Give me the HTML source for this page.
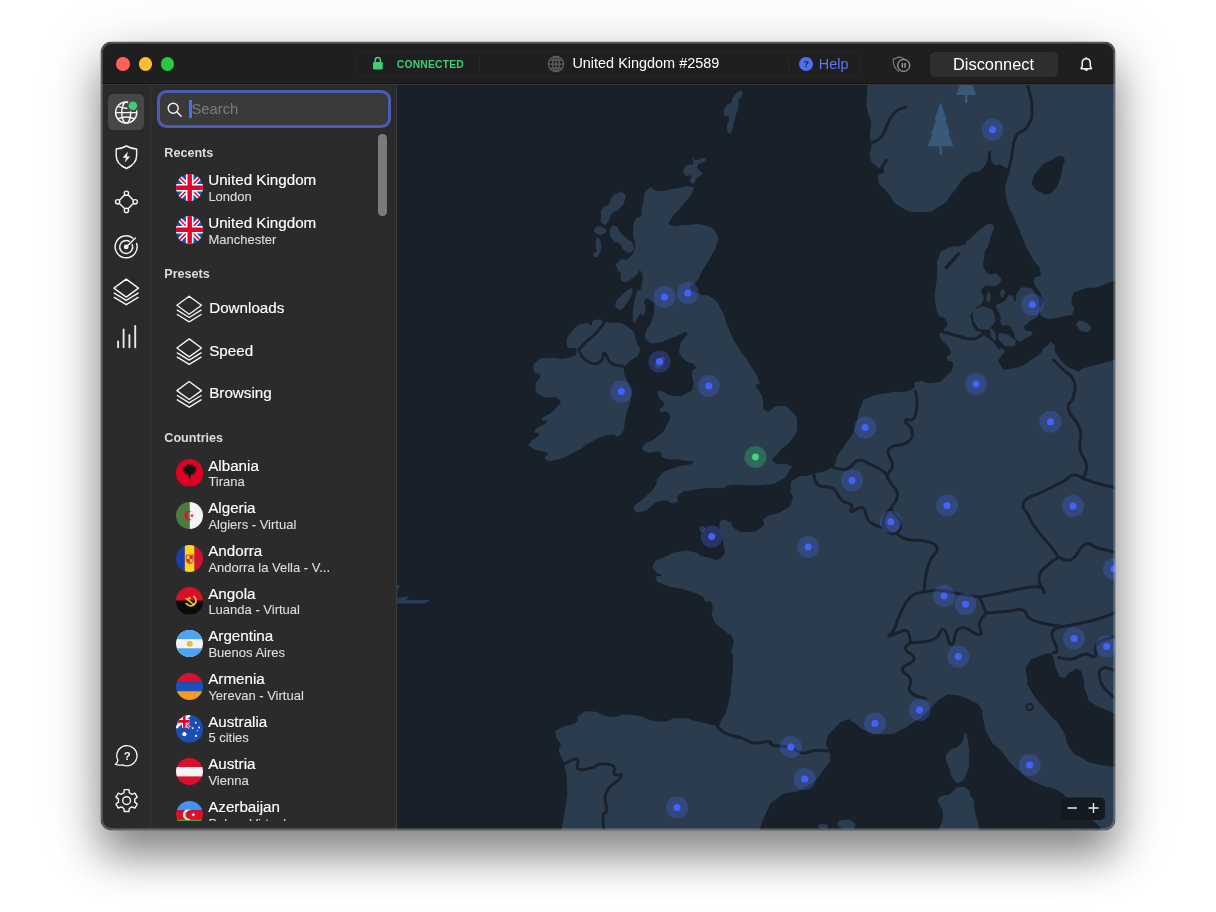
<!DOCTYPE html>
<html lang="en"><head><meta charset="utf-8"><title>VPN</title>
<style>
html,body{margin:0;padding:0;background:#fff;}
body{width:1216px;height:912px;position:relative;overflow:hidden;font-family:"Liberation Sans",Arial,sans-serif;color:#fff;-webkit-font-smoothing:antialiased;}
.shadow{position:absolute;left:101px;top:42px;width:1014px;height:787.5px;border-radius:10.5px;box-shadow:0 0 0 .5px rgba(0,0,0,.35),0 25px 42px rgba(0,0,0,.42),0 12px 70px rgba(0,0,0,.15);background:#1f1f1f;}
.win{position:absolute;left:101px;top:42px;width:1014px;height:787.5px;border-radius:10.5px;overflow:hidden;background:#2a2a2b;}
.pg{position:absolute;left:-101px;top:-42px;width:1216px;height:912px;will-change:transform;}
.abs{position:absolute;}
.tbar{left:100px;top:42px;width:1016px;height:42px;background:#1f1f1f;}
.tline2{left:100px;top:84.2px;width:1016px;height:1px;background:#383838;}
.tline{left:100px;top:83.3px;width:1016px;height:1px;background:#151515;}
.strip{left:100px;top:85px;width:50px;height:746px;background:#2a2a2b;}
.vline{left:150px;top:85px;width:1px;height:746px;background:#353536;}
.list{left:151px;top:85px;width:245.5px;height:746px;background:#2b2b2c;}
.vline2{left:395.8px;top:85px;width:1.2px;height:746px;background:#3b3b3b;}
.map{position:absolute;left:0;top:0;}
.t{position:absolute;white-space:nowrap;line-height:20px;}
.rim{position:absolute;left:101px;top:42px;width:1014px;height:787.5px;border-radius:10.5px;box-shadow:inset 0 0 0 1px rgba(255,255,255,.12),inset 0 0 0 2px rgba(255,255,255,.17);pointer-events:none;}
.tl{position:absolute;top:57.2px;width:13.4px;height:13.4px;border-radius:50%;}
.nm{color:#fff;font-size:15.2px;-webkit-text-stroke:.15px #fff;}
.sb{color:#dedede;-webkit-text-stroke:.1px #dedede;}
.hd{color:#dcdcdc;font-size:12.6px;font-weight:bold;}
.flag{position:absolute;width:27.4px;height:27.4px;border-radius:50%;overflow:hidden;}
.flag svg{display:block;width:100%;height:100%;}
.ico{position:absolute;overflow:visible;}
</style></head><body>
<div class="shadow"></div>
<div class="win"><div class="pg">
<div class="abs tbar"></div>
<div class="abs strip"></div>
<div class="abs list"></div>
<svg class="map" width="1216" height="912" viewBox="0 0 1216 912">
<defs><clipPath id="mc"><path d="M397 85H1116V832H397Z"/></clipPath></defs>
<g clip-path="url(#mc)">
<rect x="397" y="85" width="720" height="748" fill="#18202a"/>
<path d="M868 78L866.5 100C866.5 111.3 866.5 104.7 868 112C869.5 119.3 870.3 114.3 871 122C871.7 129.7 869.8 127.3 870 135C870.2 142.7 871.5 137.7 871.5 145C871.5 152.3 868.5 150 870 157C871.5 164 871.3 161.3 876 166C880.7 170.7 883.3 166.7 884 171C884.7 175.3 876.8 171.8 878 179C879.2 186.2 879.8 183.2 887.5 192.5C895.2 201.8 890 200.5 901 207C912 213.5 907.5 212.3 920.5 212C933.5 211.7 929.2 212.5 940 206C950.8 199.5 944.2 202.5 953 192.5C961.8 182.5 956.5 184.2 966.5 176C976.5 167.8 975.3 176.3 983 168C990.7 159.7 986.2 152.7 989.5 151C992.8 149.3 988.7 158 993 163C997.3 168 997.7 162.2 1002.5 166C1007.3 169.8 1006.3 164.5 1007.5 174.5C1008.7 184.5 1003.2 180.2 1006 196C1008.8 211.8 1008.3 203.3 1016 222C1023.7 240.7 1020.8 235.5 1029 252C1037.2 268.5 1038.8 261.8 1040.5 271.5C1042.2 281.2 1033.5 272.2 1034 281C1034.5 289.8 1039.3 286.3 1042 298C1044.7 309.7 1034.3 310 1042 316C1049.7 322 1054.5 317.7 1065 316C1075.5 314.3 1071.2 317 1073.5 311C1075.8 305 1069.3 305.2 1072 298C1074.7 290.8 1071.8 293.5 1081.5 289.5C1091.2 285.5 1088.2 289.8 1101 286L1120 278L1120 78L868 78ZM648 189C653.5 184.2 649.7 191.2 659 191C668.3 190.8 665.7 190 676 188.5C686.3 187 684.7 185.2 690 186.5C695.3 187.8 694.7 186 692 192.5C689.3 199 689 197.2 682 206C675 214.8 674.3 212.5 671 219C667.7 225.5 667.2 223.5 672 225.5C676.8 227.5 674.5 225 685.5 225C696.5 225 694.7 222.5 705 225.5C715.3 228.5 712.7 227.5 716.5 234C720.3 240.5 718.7 237 716.5 245C714.3 253 714.8 249.2 710 258C705.2 266.8 706.3 263.8 702 271.5C697.7 279.2 701 275.5 697 281C693 286.5 689.3 283.7 690 288C690.7 292.3 691.7 290.7 699 294C706.3 297.3 704.3 292.3 712 298C719.7 303.7 716.7 301.3 722 311C727.3 320.7 722.7 315 728 327C733.3 339 730.8 334.8 738 347C745.2 359.2 742.5 352.2 749.5 363.5C756.5 374.8 756.8 373.5 759 381C761.2 388.5 755 381 756 386C757 391 758.7 387.7 762 396C765.3 404.3 760.3 407.7 766 411C771.7 414.3 770.3 405.7 779 406C787.7 406.3 786 405.7 792 412C798 418.3 797 416 797 425C797 434 798 430 792 439C786 448 785 444.3 779 452C773 459.7 770.7 457.7 774 462C777.3 466.3 784 462 789 465C794 468 792.3 465.7 789 471C785.7 476.3 789 476.3 779 481C769 485.7 774.3 483.7 759 485C743.7 486.3 745 484 733 485C721 486 730.7 487 723 488C715.3 489 720 487.3 710 488C700 488.7 703 488 693 490C683 492 686 489.7 680 494C674 498.3 681.7 500.7 675 503C668.3 505.3 670.3 498.3 660 501C649.7 503.7 652.7 508.7 644 511C635.3 513.3 634 512.3 634 508C634 503.7 637.3 504.7 644 498C650.7 491.3 648.7 495.3 654 488C659.3 480.7 653.3 482.7 660 476C666.7 469.3 663 472.3 674 468C685 463.7 691 465.7 693 463C695 460.3 689.7 461.7 680 460C670.3 458.3 670.7 460.7 664 458C657.3 455.3 665.7 454 660 452C654.3 450 652.3 454.3 647 452C641.7 449.7 640.7 450 644 445C647.3 440 649.3 443.7 657 437C664.7 430.3 663 432.7 667 425C671 417.3 671.3 418.7 669 414C666.7 409.3 661.7 414.3 660 411C658.3 407.7 664.3 408.7 664 404C663.7 399.3 660.3 401.3 659 397C657.7 392.7 655 391.3 660 391C665 390.7 665 395.3 674 396C683 396.7 680.7 396.3 687 393C693.3 389.7 691.3 392.7 693 386C694.7 379.3 691.3 379.7 692 373C692.7 366.3 698 371 695 366C692 361 688 364.7 683 358C678 351.3 678.7 354.3 680 346C681.3 337.7 689 336 687 333C685 330 684 333.7 674 337C664 340.3 666 342 657 343C648 344 650.7 343.7 647 340C643.3 336.3 644.3 338.7 646 332C647.7 325.3 649.3 328.7 652 320C654.7 311.3 654.5 312.3 654 306C653.5 299.7 653 303.3 650.5 301C648 298.7 649 297.7 646.5 299C644 300.3 645.8 298.8 643 305C640.2 311.2 641.3 312.8 638 317.5C634.7 322.2 633.7 326.7 633 319C632.3 311.3 633.3 304.8 636 294.5C638.7 284.2 639.3 295.7 641 288C642.7 280.3 643.7 274.8 641 271.5C638.3 268.2 639 274.7 633 278C627 281.3 627 283.7 623 281.5C619 279.3 620 278.2 621 271.5C622 264.8 621.5 269.2 626 261.5C630.5 253.8 632.2 258.3 634.5 248.5C636.8 238.7 632.5 241.8 633 232C633.5 222.2 633.3 224.5 636 219C638.7 213.5 638.8 220 641 215.5C643.2 211 640.2 214.3 642.5 205.5C644.8 196.7 642.5 193.8 648 189ZM595 320C600.7 319 597 319.7 608 322C619 324.3 618.3 320 628 327C637.7 334 633.3 334.3 637 343C640.7 351.7 642 346.3 639 353C636 359.7 633 357.3 628 363C623 368.7 624 363.3 624 370C624 376.7 625.7 374.3 628 383C630.3 391.7 631.7 385 631 396C630.3 407 629.3 403.3 626 416C622.7 428.7 627 427.7 621 434C615 440.3 618 432.3 608 435C598 437.7 602 436.3 591 442C580 447.7 587 446 575 452C563 458 565 458 555 460C545 462 547.7 460.3 545 458C542.3 455.7 551.3 456.3 547 453C542.7 449.7 537.5 451.7 532 448C526.5 444.3 528.2 446.3 530.5 442C532.8 437.7 537.5 439 539 435C540.5 431 532.3 434.3 535 430C537.7 425.7 544.7 425.7 547 422C549.3 418.3 539.3 423.3 542 419C544.7 414.7 549.5 415.7 555 409C560.5 402.3 562.8 403.3 558.5 399C554.2 394.7 549.7 400.3 542 396C534.3 391.7 536.2 392.7 535.5 386C534.8 379.3 540.5 381 540 376C539.5 371 535 376 534 371C533 366 532 365.3 537 361C542 356.7 538.7 359 549 358C559.3 357 558.8 360.7 568 358C577.2 355.3 576.8 354.3 576.5 350C576.2 345.7 568.2 351.7 567 345C565.8 338.3 567 337.2 573 330C579 322.8 579 325.2 585 323.5C591 321.8 587.7 326.2 591 325C594.3 323.8 589.3 321 595 320ZM741 91C742.7 92 742.7 93 742 96C741.3 99 740.3 96 739 100C737.7 104 739.3 102 738 108C736.7 114 737 110.7 735 118C733 125.3 734 125 732 130C730 135 730.7 134.3 729 133C727.3 131.7 727 131 727 126C727 121 730 122 729 118C728 114 725 118 724 114C723 110 723.7 109.7 726 106C728.3 102.3 728.7 105.7 731 103C733.3 100.3 731 101.3 733 98C735 94.7 734.3 95.3 737 93C739.7 90.7 739.3 90 741 91ZM692 157C693 155.7 692 159.7 696 160C700 160.3 701 157.7 704 158C707 158.3 707 158.7 705 161C703 163.3 700 162 698 165C696 168 697.7 167 699 170C700.3 173 702.7 171.3 702 174C701.3 176.7 699.7 175 697 178C694.3 181 696.3 182 694 183C691.7 184 691 183.3 690 181C689 178.7 692.7 178 691 176C689.3 174 687.3 177.3 685 175C682.7 172.7 683 172.3 684 169C685 165.7 685 166.7 688 165C691 163.3 691.7 166.7 693 164C694.3 161.3 691 158.3 692 157ZM623 193C625.3 195 626 194 625 199C624 204 624.3 203 620 208C615.7 213 616 209.3 612 214C608 218.7 611 218.7 608 222C605 225.3 605.3 225.7 603 224C600.7 222.3 601 222.3 601 217C601 211.7 600.3 212.3 603 208C605.7 203.7 606 207.7 609 204C612 200.3 609 200.7 612 197C615 193.3 614.3 194.3 618 193C621.7 191.7 620.7 191 623 193ZM595 228C597.3 226 600.7 226.3 604 228C607.3 229.7 607.3 231 605 233C602.7 235 600.3 235.7 597 234C593.7 232.3 592.7 230 595 228ZM596 240C597 236.3 598.3 236.7 600 240C601.7 243.3 602 246.3 601 250C600 253.7 598.7 254.3 597 251C595.3 247.7 595 243.7 596 240ZM594 253C595.3 251.3 596.7 251 598 252C599.3 253 599.3 254.3 598 256C596.7 257.7 595.3 258 594 257C592.7 256 592.7 254.7 594 253ZM610 230C611 225.3 612.7 225.3 616 226C619.3 226.7 616.7 228 620 232C623.3 236 621.7 234 626 238C630.3 242 631.3 239.3 633 244C634.7 248.7 634 250 631 252C628 254 627.7 252.7 624 250C620.3 247.3 623.7 247.3 620 244C616.3 240.7 616.3 244.7 613 240C609.7 235.3 609 234.7 610 230ZM618 262C621 259.3 622.7 258 626 260C629.3 262 629.3 264 628 268C626.7 272 625.7 272 622 272C618.3 272 618.3 271.3 617 268C615.7 264.7 615 264.7 618 262ZM616 302C617.3 298 617 300 621 296C625 292 624.3 292.3 628 290C631.7 287.7 631 287 632 289C633 291 633 291 631 296C629 301 629 299.7 626 304C623 308.3 625 307.7 622 309C619 310.3 619 310.3 617 308C615 305.7 614.7 306 616 302ZM640 304C641 300.3 642.3 300.3 644 303C645.7 305.7 646 308.3 645 312C644 315.7 642.7 316.7 641 314C639.3 311.3 639 307.7 640 304ZM655 366C654.7 363 656 362 659 359C662 356 662.3 356 664 357C665.7 358 665.3 358.3 664 362C662.7 365.7 663 366.7 660 368C657 369.3 655.3 369 655 366ZM700 527C701.3 525.7 702.7 525.7 704 527C705.3 528.3 705.3 529.7 704 531C702.7 532.3 701.3 532.3 700 531C698.7 529.7 698.7 528.3 700 527ZM973 313C973.7 307.3 973 309.7 978 308C983 306.3 982.5 305.3 988 308C993.5 310.7 993.2 310 994.5 316C995.8 322 995.5 321.5 992 326C988.5 330.5 989.3 329.8 984 329.5C978.7 329.2 979.7 330.5 976 325C972.3 319.5 972.3 318.7 973 313ZM996.8 304.8C999.1 302.5 999.1 304.7 1003.7 301.4C1008.3 298.1 1006.8 294.9 1010.6 294.9C1014.4 294.9 1012.9 302.3 1015.2 301.4C1017.5 300.5 1013.7 296.8 1017.5 292.2C1021.3 287.6 1020.6 286.8 1026.7 287.6C1032.8 288.4 1031.7 287.6 1035.9 294.5C1040.1 301.4 1038.6 301.4 1039.4 308.3C1040.2 315.2 1041.7 310.6 1038.2 315.2C1034.7 319.8 1033.6 317.5 1029 322.1C1024.4 326.7 1023.2 325.5 1024.4 329C1025.6 332.5 1032.1 329.4 1032.5 332.5C1032.9 335.6 1030.6 335.5 1025.6 338.2C1020.6 340.9 1021.7 342.9 1017.5 340.6C1013.3 338.3 1016 336.3 1012.9 331.3C1009.8 326.3 1012.1 327.9 1008.3 325.6C1004.5 323.3 1004.1 327.9 1001.4 324.4C998.7 320.9 1001.7 320.6 1000.2 315.2C998.7 309.8 997.9 311.8 996.8 308.3C995.7 304.8 994.5 307.1 996.8 304.8ZM998.5 335.5C999.2 332.3 999.5 332.8 1004 333.5C1008.5 334.2 1008.2 334.3 1012 337.5C1015.8 340.7 1016.2 340 1015.5 343C1014.8 346 1014.5 346.5 1010 346.5C1005.5 346.5 1005.8 346.7 1002 343C998.2 339.3 997.8 338.7 998.5 335.5ZM999 350C1000 348.3 1001.3 348 1003 349C1004.7 350 1005 351.3 1004 353C1003 354.7 1001.7 355 1000 354C998.3 353 998 351.7 999 350ZM1077 323C1078.3 320.7 1078 320.3 1082 321C1086 321.7 1086.3 322 1089 325C1091.7 328 1091.3 327.7 1090 330C1088.7 332.3 1089 332.7 1085 332C1081 331.3 1080.7 331 1078 328C1075.3 325 1075.7 325.3 1077 323ZM987 294C988 291.3 989 291 990 293C991 295 991 297.3 990 300C989 302.7 988 303 987 301C986 299 986 296.7 987 294ZM990 331C990 328 991 327.7 993 330C995 332.3 996 335 996 338C996 341 995 341.3 993 339C991 336.7 990 334 990 331ZM1001 291C1002 289 1003 288.3 1004 290C1005 291.7 1005 294 1004 296C1003 298 1002 297.7 1001 296C1000 294.3 1000 293 1001 291ZM965 733C966.8 733.3 966.7 733.7 968 742C969.3 750.3 969.3 748 969 758C968.7 768 969.8 764 967 772C964.2 780 965 779.7 960.5 782C956 784.3 957.2 783.5 953.5 779C949.8 774.5 952 775.5 949.5 768.5C947 761.5 946 763.8 946 758C946 752.2 945.7 754.8 949.5 751C953.3 747.2 953.2 749.8 957.5 746.5C961.8 743.2 960 745.5 962.5 741C965 736.5 963.2 732.7 965 733ZM938 799C939.3 795.5 940 797.2 944 795.5C948 793.8 946.3 796.2 950 794C953.7 791.8 951.7 791.3 955 789C958.3 786.7 956 787 960 787C964 787 963.3 786 967 789C970.7 792 968.7 790.3 971 796C973.3 801.7 973 792 974 806C975 820 984.3 827.3 974 838C963.7 848.7 953.3 845.7 943 838C932.7 830.3 944 825.7 943 815C942 804.3 941.7 811.3 940 806C938.3 800.7 936.7 802.5 938 799ZM838 823C839.3 820.3 840 820.3 845 820C850 819.7 849.7 819.7 853 822C856.3 824.3 856 824.7 855 827C854 829.3 854.7 828.7 850 829C845.3 829.3 845 830 841 828C837 826 836.7 825.7 838 823ZM818 826C818.7 824.3 820.7 823.7 824 824C827.3 824.3 828.7 825.3 828 827C827.3 828.7 825.3 829.3 822 829C818.7 828.7 817.3 827.7 818 826ZM560.5 836L565.5 807C567.7 789.7 567.5 798.3 567 784C566.5 769.7 566.7 775 564 764C561.3 753 560.2 757.5 559 751C557.8 744.5 561.7 750 560.5 744.5C559.3 739 555.5 740 555.5 734.5C555.5 729 554 731.8 560.5 728C567 724.2 568.5 727.3 575 723C581.5 718.7 574 718.8 580 715C586 711.2 583 711 593 711.5C603 712 596.7 715.3 610 716.5C623.3 717.7 616.7 713.3 633 715C649.3 716.7 643.7 720.5 659 721.5C674.3 722.5 665.8 718 679 718C692.2 718 686 719.2 698.5 721.5C711 723.8 708.8 725.5 716.5 725C724.2 724.5 717.7 726.7 721.5 720C725.3 713.3 724.7 717.7 728 705C731.3 692.3 729.8 697.3 731.5 682C733.2 666.7 733 669 733 659C733 649 731.5 658.7 731.5 652C731.5 645.3 735.2 646 733 639C730.8 632 731.5 637.5 725 631C718.5 624.5 717.8 628.3 713.5 619.5C709.2 610.7 714.8 610.7 712 604.5C709.2 598.3 708.3 603.7 705 601C701.7 598.3 708.5 600.2 702 596.5C695.5 592.8 697.7 593.8 685.5 590C673.3 586.2 675.3 589 665.5 585C655.7 581 657.2 581.3 656 578C654.8 574.7 662 577 662 575C662 573 658.7 575.8 656 572C653.3 568.2 651 568.5 654 563.5C657 558.5 656.3 561 665 557C673.7 553 670.7 553.2 680 551.5C689.3 549.8 684.3 550.2 693 552C701.7 553.8 696.3 555.3 706 557C715.7 558.7 716.3 562.5 722 557C727.7 551.5 723.7 552 723 540.5C722.3 529 717.3 528.5 720 522.5C722.7 516.5 726.7 521 731 522.5C735.3 524 728 523.8 733 527C738 530.2 736.3 532 746 532C755.7 532 755.5 531.8 762 527C768.5 522.2 758.8 522.8 765.5 517.5C772.2 512.2 773.2 516.5 782 511C790.8 505.5 789.2 508.5 792 501C794.8 493.5 789.3 496 790.5 488.5C791.7 481 787.8 483.3 795.5 478.5C803.2 473.7 801.5 477.8 813.5 474C825.5 470.2 823.3 473.3 831.5 467C839.7 460.7 833.5 462.3 838 455C842.5 447.7 839.5 453.7 845 445C850.5 436.3 849.2 442 854.5 429C859.8 416 856.5 416.3 861 406C865.5 395.7 859.2 402.3 868 398C876.8 393.7 873.3 395.7 887.5 393C901.7 390.3 900.7 393.8 910.5 390C920.3 386.2 909.3 383.8 917 381.5C924.7 379.2 924.2 384.5 933.5 383C942.8 381.5 938.5 383 945 377C951.5 371 952.3 371.2 953 365C953.7 358.8 948 363.5 947 358.5C946 353.5 952.3 357.2 950 350C947.7 342.8 942.2 343.5 940 337C937.8 330.5 941.3 335.8 943.5 330.5C945.7 325.2 949 328.7 946.5 321C944 313.3 939.2 322.8 936 307.5C932.8 292.2 936.2 291.5 937 275C937.8 258.5 935.2 266.8 938.5 258C941.8 249.2 938.8 252.8 947 248.5C955.2 244.2 955.3 248.3 963 245C970.7 241.7 960.7 245.5 970 238.5C979.3 231.5 984.5 222.8 991 224C997.5 225.2 991.7 231.7 989.5 242C987.3 252.3 985.7 245.2 984.5 255C983.3 264.8 981.5 264.8 986 271.5C990.5 278.2 994 270.7 998 275C1002 279.3 1003 280.2 998 284.5C993 288.8 988 282.5 983 288C978 293.5 986.3 293.3 983 301C979.7 308.7 976.8 304.3 973 311C969.2 317.7 970.3 314.5 971.5 321C972.7 327.5 972.7 326.2 976.5 330.5C980.3 334.8 975.3 327.3 983 334C990.7 340.7 994 340.7 999.5 350.5C1005 360.3 995.2 357.5 999.5 363.5C1003.8 369.5 1000.5 370.7 1012.5 368.5C1024.5 366.3 1024.5 364.2 1035.5 357C1046.5 349.8 1039.5 351.3 1045.5 347C1051.5 342.7 1049.2 340.7 1053.5 344C1057.8 347.3 1051.3 348.3 1058.5 357C1065.7 365.7 1065.2 366.7 1075 370C1084.8 373.3 1073 370.8 1088 367L1120 358.5L1120 716L1096 705.5C1084.8 698 1090.8 702.8 1086.5 693.5C1082.2 684.2 1085.7 685.5 1083 677.5C1080.3 669.5 1082.7 671.3 1078.5 669.5C1074.3 667.7 1075.8 669.3 1070.5 672C1065.2 674.7 1067.2 678.3 1062.5 677.5C1057.8 676.7 1059.7 676.3 1056.5 669.5C1053.3 662.7 1055.3 662.3 1053 657C1050.7 651.7 1054.5 653.5 1049.5 653.5C1044.5 653.5 1045.2 653.5 1038 657C1030.8 660.5 1031.7 657.2 1028 664C1024.3 670.8 1025.8 668.3 1027 677.5C1028.2 686.7 1024.7 680 1031.5 691.5C1038.3 703 1037.5 699.7 1047.5 712C1057.5 724.3 1053.8 716.2 1061.5 728.5C1069.2 740.8 1063.7 739.2 1070.5 749C1077.3 758.8 1073.5 753 1082 758C1090.5 763 1083.3 760.7 1096 764L1120 768L1120 836L1104 836L1100.5 828C1097.2 823.2 1099.5 826.5 1094 821.5C1088.5 816.5 1091.3 818.8 1084 813C1076.7 807.2 1080.5 811.3 1072 804C1063.5 796.7 1069.5 797.7 1058.5 791C1047.5 784.3 1052.2 790.7 1039 784C1025.8 777.3 1031.7 782 1019 771C1006.3 760 1010.8 762 1001 751C991.2 740 995.5 748.8 989.5 738C983.5 727.2 985.8 728.3 983 718.5C980.2 708.7 985.3 714.7 981 708.5C976.7 702.3 979.3 704.5 970 700C960.7 695.5 961.8 696 953 695C944.2 694 950 693.7 943.5 697C937 700.3 940 699 933.5 705C927 711 930.5 709.3 924 715C917.5 720.7 921.8 717 914 722C906.2 727 909.3 726 900.5 730C891.7 734 898.3 733.5 887.5 734C876.7 734.5 879 735.2 868 731.5C857 727.8 861.7 726.8 854.5 723C847.3 719.2 853 718.3 846.5 720C840 721.7 841.7 720.8 835 728C828.3 735.2 828.2 732.7 826.5 741.5C824.8 750.3 830.5 745.7 830 754.5C829.5 763.3 833.3 757 825 768C816.7 779 820.3 777.8 805 787.5C789.7 797.2 792.3 787.8 779 797C765.7 806.2 772.3 802 765 815L757 836L560.5 836Z" fill="#2a3c4e"/>
<path d="M1063 157C1059 153.8 1057.7 156.8 1050 160.5C1042.3 164.2 1045.8 161.5 1040 168C1034.2 174.5 1034.5 173.5 1032.5 180C1030.5 186.5 1031.2 183.3 1034 187.5C1036.8 191.7 1036.3 190.3 1041 192.5C1045.7 194.7 1043.7 194.8 1048 194C1052.3 193.2 1050.5 193.7 1054 190C1057.5 186.3 1055.8 189.7 1058.5 183C1061.2 176.3 1060.5 178.7 1062 170C1063.5 161.3 1067 160.2 1063 157Z" fill="#18202a"/>
<path d="M397 598L409 596.5L406 600L430 600L425 603.5L397 603.5ZM397 585L400 585L398 590L397 590Z" fill="#253d58"/>
<path d="M940.6 102.2L947 120.6L945.2 119.8L950.2 134L948.3 133L953.3 146.2L927.9 146.2L932.9 133L931 134L936 119.8L934.2 120.6ZM939.5 146.2h2.2v8.8h-2.2ZM966.1 60.6L971.1 75L969.7 74.4L973.6 85.5L972.2 84.8L976.1 95.1L956.1 95.1L960 84.8L958.6 85.5L962.5 74.4L961.1 75ZM965 95.1h2.2v7.8h-2.2Z" fill="#38597a"/>
<path d="M604.5 322C602.2 324.9 601.7 326.9 596 333C590.3 339.1 587.3 339.7 583 345C578.7 350.3 577.9 348.2 580 353C582.1 357.8 585.4 360.9 591 363C596.6 365.1 597.4 363.7 601 361C604.6 358.3 601.8 352.5 604.5 353C607.2 353.5 606.2 359.5 611 363C615.8 366.5 619.4 365.2 622.5 366M915.5 391.5C915.9 394.6 917.4 395.9 917 403C916.6 410.1 917.1 413.2 914 418C910.9 422.8 906 417.5 905.5 421C905 424.5 911.6 425.3 912 431C912.4 436.7 913.1 437.7 907 442.5C900.9 447.3 892.9 442.9 889 449C885.1 455.1 892.9 458.6 892.5 465.5C892.1 472.4 887.9 470.2 887.5 475C887.1 479.8 890.1 481.2 891 483.5M831.5 467C835.5 467.5 839.4 470.7 846.5 469C853.6 467.3 851.9 461.8 858 460.5C864.1 459.2 862.6 460.9 869.5 464C876.4 467.1 879.2 468.1 884 472C888.8 475.9 886.6 476.8 887.5 478.5M887.5 478.5C888.4 479.8 888.3 479.1 891 483.5C893.7 487.9 897.5 488.5 897.5 495C897.5 501.5 892.7 504.5 891 508M813.5 474C814.8 476.9 813.3 481.1 818.5 485C823.7 488.9 826.9 484.5 833 488.5C839.1 492.5 836.6 495.6 841.5 500C846.4 504.4 848.8 501.9 851.5 505C854.2 508.1 848.4 510.7 851.5 511.5C854.6 512.3 858.2 505.3 863 508C867.8 510.7 863.9 516.2 869.5 521.5C875.1 526.8 880.1 526.3 884 528M891 508C889.1 510.7 885.3 512.3 884 518C882.7 523.7 882.8 525.5 886 529.5C889.2 533.5 892.1 534.7 896 533C899.9 531.3 901.4 528.7 900.5 523C899.6 517.3 895 515.5 892.5 511.5C890 507.5 891.4 508.9 891 508M896 533C898.9 534.7 899.5 537.4 907 539.5C914.5 541.6 916 538.7 924 541C932 543.3 935.4 542.7 937 548C938.6 553.3 933.1 553.3 930 561C926.9 568.7 927.1 568.7 925.5 577C923.9 585.3 924.4 588 924 592M924 592C928.3 591.6 930.4 590 940 590.5C949.6 591 949.5 592.3 960 594C970.5 595.7 974.3 596.2 979.5 597M979.5 597C983.9 596.2 985.5 596.1 996 594C1006.5 591.9 1007.5 590.9 1019 589C1030.5 587.1 1032.3 586.2 1039 587C1045.7 587.8 1044 594.7 1044 592C1044 589.3 1037.7 584.5 1039 577C1040.3 569.5 1043.8 569.2 1049 564C1054.2 558.8 1056 559.2 1058.5 557.5M1058.5 557.5C1056.8 555 1058.1 555.9 1052 548C1045.9 540.1 1041.6 536.4 1035.5 528C1029.4 519.6 1032.1 523.4 1029 516.5C1025.9 509.6 1020.5 508.5 1024 502C1027.5 495.5 1031.9 497.3 1042 492C1052.1 486.7 1053.6 486.5 1062 482C1070.4 477.5 1067.9 475.9 1073.5 475C1079.1 474.1 1080.5 477.6 1083 478.5M1053.5 360C1056.2 362.7 1058.2 364.7 1063.5 370C1068.8 375.3 1070.8 372.9 1073.5 380C1076.2 387.1 1074.8 388.6 1073.5 396.5C1072.2 404.4 1066.8 400.8 1068.5 409.5C1070.2 418.2 1076.9 418.5 1080 429C1083.1 439.5 1078.3 439.3 1080 449C1081.7 458.7 1085.7 457.6 1086.5 465.5C1087.3 473.4 1083.9 475 1083 478.5M1083 478.5C1087 479.8 1088.7 480.8 1098 483.5C1107.3 486.2 1112.7 487.2 1118 488.5M1058.5 557.5C1062.1 557.9 1064.9 562.5 1072 559C1079.1 555.5 1078.1 547.4 1085 544.5C1091.9 541.6 1089.2 545.7 1098 548C1106.8 550.3 1112.7 551.7 1118 553M924 592C920.4 593.3 916.8 591.3 910.5 597C904.2 602.7 904.9 604.8 900.5 613.5C896.1 622.2 897.1 623.5 894 629.5C890.9 635.5 888.1 635.1 889 636C889.9 636.9 892.7 634.3 897.5 633C902.3 631.7 903.5 628.3 907 631C910.5 633.7 909.6 639.8 910.5 643M910.5 643C916.6 642.1 924.7 643.1 933.5 639.5C942.3 635.9 938.7 628.2 943.5 629.5C948.3 630.8 947.1 644.9 951.5 644.5C955.9 644.1 952.5 630.7 960 628C967.5 625.3 974.3 635.8 979.5 634.5C984.7 633.2 977.8 628.7 979.5 623C981.2 617.3 984.3 615.7 986 613M979.5 597C980.4 599.1 981.3 600.7 983 605C984.7 609.3 985.2 610.9 986 613M986 613C991.3 612.6 996.3 612.3 1006 611.5C1015.7 610.7 1016.4 608.3 1022.5 610C1028.6 611.7 1023.8 614.5 1029 618C1034.2 621.5 1033.2 620.7 1042 623C1050.8 625.3 1056.7 625.6 1062 626.5M1062 626.5C1067.2 625.6 1071.1 625.3 1081.5 623C1091.9 620.7 1091.3 621.1 1101 618C1110.7 614.9 1113.5 613.2 1118 611.5M1062 626.5C1059.3 628.2 1053.3 627 1052 633C1050.7 639 1056.6 643.8 1057 649C1057.4 654.2 1054.4 651.6 1053.5 652.5M1058.5 657.5C1062.1 657.9 1064.9 659.9 1072 659C1079.1 658.1 1078.9 654.8 1085 654C1091.1 653.2 1091.5 658.9 1095 656C1098.5 653.1 1091.9 648.3 1098 643C1104.1 637.7 1112.7 637.9 1118 636M925.5 698.5C921.5 696.8 914.5 697.2 910.5 692C906.5 686.8 912.6 685.1 910.5 679C908.4 672.9 901.6 674.3 902.5 669C903.4 663.7 913.2 664.3 914 659C914.8 653.7 906.4 653.3 905.5 649C904.6 644.7 909.2 644.6 910.5 643M716.5 725C718.8 727.1 718.3 729.5 725 733C731.7 736.5 733.6 735.3 741.5 738C749.4 740.7 747.2 742.1 754.5 743C761.8 743.9 764.2 741 769 741.5C773.8 742 766.8 743.4 772.5 745C778.2 746.6 782.6 745.4 790.5 747.5C798.4 749.6 795.5 752.2 802 753C808.5 753.8 807.5 751 815 750.5C822.5 750 826 750.9 830 751M564 764C567.5 762.7 573.1 757.7 577 759C580.9 760.3 574.2 766.7 578.5 769C582.8 771.3 587.3 768.8 593 767.5C598.7 766.2 594.7 764.4 600 764C605.3 763.6 609.1 763.3 613 766C616.9 768.7 612.4 771.1 614.5 774C616.6 776.9 623.1 772.2 621 777C618.9 781.8 610.4 783.2 606.5 792C602.6 800.8 607.4 803.3 606.5 810C605.6 816.7 603.4 809.5 603 817C602.6 824.5 604.5 832.4 605 838M943.5 332C947.4 333.1 950.1 334.1 958 336C965.9 337.9 966.3 339.5 973 339C979.7 338.5 980.3 335.3 983 334M1025.5 78C1027.2 85.7 1031.6 93.9 1032 107C1032.4 120.1 1031.3 119.1 1027 127C1022.7 134.9 1020.3 127.7 1016 136.5C1011.7 145.3 1013.3 149.9 1011 160C1008.7 170.1 1008.4 170.6 1007.5 174.5M905.5 107C903 108.2 900.4 107.8 896 111.5C891.6 115.2 892.7 114.5 889 121C885.3 127.5 886.3 130.3 882 136C877.7 141.7 875.4 140.8 873 142.5M878 173C879.3 171.1 880.7 169.5 883 166C885.3 162.5 885.6 161.6 886.5 160M1118 672C1114 670.9 1107.8 665.9 1103 668C1098.2 670.1 1098.7 673.6 1100 680C1101.3 686.4 1103.2 686.7 1108 692C1112.8 697.3 1115.3 697.9 1118 700" fill="none" stroke="#19212c" stroke-width="2.9" stroke-linejoin="round" stroke-linecap="round"/>
<path d="M958.5 254C956.8 255.9 955.2 257.4 952 261C948.8 264.6 948 265.8 946.5 267.5" fill="none" stroke="#18202a" stroke-width="3.4" stroke-linecap="round"/>
<circle cx="1029.7" cy="707" r="3.2" fill="none" stroke="#19212c" stroke-width="1.8"/>
<circle cx="664.4" cy="297" r="11" fill="#4a6cf7" fill-opacity=".28"/><circle cx="664.4" cy="297" r="3.5" fill="#4262fa"/><circle cx="687.8" cy="293" r="11" fill="#4a6cf7" fill-opacity=".28"/><circle cx="687.8" cy="293" r="3.5" fill="#4262fa"/><circle cx="659.5" cy="361.6" r="11" fill="#4a6cf7" fill-opacity=".28"/><circle cx="659.5" cy="361.6" r="3.5" fill="#4262fa"/><circle cx="708.8" cy="386" r="11" fill="#4a6cf7" fill-opacity=".28"/><circle cx="708.8" cy="386" r="3.5" fill="#4262fa"/><circle cx="621.3" cy="391.6" r="11" fill="#4a6cf7" fill-opacity=".28"/><circle cx="621.3" cy="391.6" r="3.5" fill="#4262fa"/><circle cx="865.2" cy="427.4" r="11" fill="#4a6cf7" fill-opacity=".28"/><circle cx="865.2" cy="427.4" r="3.5" fill="#4262fa"/><circle cx="852" cy="480.4" r="11" fill="#4a6cf7" fill-opacity=".28"/><circle cx="852" cy="480.4" r="3.5" fill="#4262fa"/><circle cx="890.7" cy="521.8" r="11" fill="#4a6cf7" fill-opacity=".28"/><circle cx="890.7" cy="521.8" r="3.5" fill="#4262fa"/><circle cx="711.8" cy="536.6" r="11" fill="#4a6cf7" fill-opacity=".28"/><circle cx="711.8" cy="536.6" r="3.5" fill="#4262fa"/><circle cx="808.2" cy="547" r="11" fill="#4a6cf7" fill-opacity=".28"/><circle cx="808.2" cy="547" r="3.5" fill="#4262fa"/><circle cx="992.5" cy="129.7" r="11" fill="#4a6cf7" fill-opacity=".28"/><circle cx="992.5" cy="129.7" r="3.5" fill="#4262fa"/><circle cx="1032.3" cy="304.4" r="11" fill="#4a6cf7" fill-opacity=".28"/><circle cx="1032.3" cy="304.4" r="3.5" fill="#4262fa"/><circle cx="976" cy="384" r="11" fill="#4a6cf7" fill-opacity=".28"/><circle cx="976" cy="384" r="3.5" fill="#4262fa"/><circle cx="1050.4" cy="421.8" r="11" fill="#4a6cf7" fill-opacity=".28"/><circle cx="1050.4" cy="421.8" r="3.5" fill="#4262fa"/><circle cx="947" cy="505.4" r="11" fill="#4a6cf7" fill-opacity=".28"/><circle cx="947" cy="505.4" r="3.5" fill="#4262fa"/><circle cx="1073" cy="506" r="11" fill="#4a6cf7" fill-opacity=".28"/><circle cx="1073" cy="506" r="3.5" fill="#4262fa"/><circle cx="944" cy="596" r="11" fill="#4a6cf7" fill-opacity=".28"/><circle cx="944" cy="596" r="3.5" fill="#4262fa"/><circle cx="965.5" cy="604.3" r="11" fill="#4a6cf7" fill-opacity=".28"/><circle cx="965.5" cy="604.3" r="3.5" fill="#4262fa"/><circle cx="1114" cy="569" r="11" fill="#4a6cf7" fill-opacity=".28"/><circle cx="1114" cy="569" r="3.5" fill="#4262fa"/><circle cx="1074" cy="638.5" r="11" fill="#4a6cf7" fill-opacity=".28"/><circle cx="1074" cy="638.5" r="3.5" fill="#4262fa"/><circle cx="1106.7" cy="646.4" r="11" fill="#4a6cf7" fill-opacity=".28"/><circle cx="1106.7" cy="646.4" r="3.5" fill="#4262fa"/><circle cx="958.3" cy="656.6" r="11" fill="#4a6cf7" fill-opacity=".28"/><circle cx="958.3" cy="656.6" r="3.5" fill="#4262fa"/><circle cx="919.5" cy="710" r="11" fill="#4a6cf7" fill-opacity=".28"/><circle cx="919.5" cy="710" r="3.5" fill="#4262fa"/><circle cx="875" cy="723.4" r="11" fill="#4a6cf7" fill-opacity=".28"/><circle cx="875" cy="723.4" r="3.5" fill="#4262fa"/><circle cx="790.9" cy="747" r="11" fill="#4a6cf7" fill-opacity=".28"/><circle cx="790.9" cy="747" r="3.5" fill="#4262fa"/><circle cx="804.7" cy="779" r="11" fill="#4a6cf7" fill-opacity=".28"/><circle cx="804.7" cy="779" r="3.5" fill="#4262fa"/><circle cx="1029.7" cy="765" r="11" fill="#4a6cf7" fill-opacity=".28"/><circle cx="1029.7" cy="765" r="3.5" fill="#4262fa"/><circle cx="677" cy="807.4" r="11" fill="#4a6cf7" fill-opacity=".28"/><circle cx="677" cy="807.4" r="3.5" fill="#4262fa"/><circle cx="755.5" cy="457" r="11" fill="#3fd07a" fill-opacity=".3"/><circle cx="755.5" cy="457" r="3.4" fill="#3fd67c"/>
<rect x="1061" y="797.5" width="44" height="22.5" rx="4.5" fill="#141a22"/>
<path d="M1067.5 808h9.5M1088.5 808h10M1093.5 803v10" stroke="#e8e8e8" stroke-width="1.4" fill="none"/>
</g>
</svg>
<div class="abs tline2"></div>
<div class="abs tline"></div>
<div class="abs vline"></div>
<div class="abs vline2"></div>
<div class="tl" style="left:116.4px;background:#fe5f58"></div><div class="tl" style="left:138.7px;background:#febc2e"></div><div class="tl" style="left:161.1px;background:#28c840"></div><div class="abs" style="left:355px;top:51px;width:505px;height:25.5px;border-radius:6px;box-shadow:inset 0 0 0 1px #262626;background:#1f1f1f"></div><svg class="ico" style="left:372px;top:56px" width="12" height="15" viewBox="0 0 12 15"><path d="M3.2 6.2V4.1a2.6 2.6 0 0 1 5.2 0v2.1" fill="none" stroke="#3fcf72" stroke-width="1.5"/><rect x="1" y="6" width="9.7" height="7.6" rx="1.3" fill="#3fcf72"/></svg><div class="t " style="left:396.8px;top:54.63px;font-size:10.3px;font-weight:bold;color:#3fcf72;letter-spacing:.22px">CONNECTED</div><div class="abs" style="left:479px;top:57.5px;width:1px;height:13.5px;background:#2c2c2c"></div><svg class="ico" style="left:547px;top:55px" width="18" height="18" viewBox="0 0 18 18"><g fill="none" stroke="#5d6268" stroke-width="1.25"><circle cx="9" cy="9" r="7.6"/><ellipse cx="9" cy="9" rx="3.4" ry="7.6"/><path d="M1.4 9h15.2M9 1.4v15.2M2.6 5h12.8M2.6 13h12.8"/></g></svg><div class="t " style="left:572.4px;top:53.39px;font-size:14.45px;color:#fff">United Kingdom #2589</div><div class="abs" style="left:788px;top:57.5px;width:1px;height:13.5px;background:#2c2c2c"></div><div class="abs" style="left:798.9px;top:56.9px;width:14px;height:14px;border-radius:50%;background:#4f6ef2"></div><div class="t " style="left:803.4px;top:53.98px;font-size:9px;font-weight:bold;color:#1f1f1f">?</div><div class="t " style="left:818.8px;top:54.01px;font-size:14.4px;color:#5a78f5">Help</div><svg class="ico" style="left:0;top:0" width="1216" height="912" viewBox="0 0 1216 912"><g fill="none" stroke-linecap="round" stroke-linejoin="round"><path d="M903.8 58.5L899 56.9L893.2 59.4C893 64 894.2 68.300 898.600 71.300" stroke="#777" stroke-width="1.200"/><circle cx="903.700" cy="65.400" r="6" stroke="#9a9a9a" stroke-width="1.250" fill="#1f1f1f"/><path d="M902.400 63.100v4.700M905 63.100v4.700" stroke="#a2a2a2" stroke-width="1.350" stroke-linecap="butt"/></g></svg><div class="abs" style="left:930.3px;top:52px;width:128px;height:24.6px;border-radius:5.5px;background:#2f2f2f"></div><div class="t " style="left:953.0px;top:53.82px;font-size:16.4px;color:#fff">Disconnect</div><svg class="ico" style="left:0;top:0" width="1216" height="912" viewBox="0 0 1216 912"><g transform="translate(1086.25 64.3) scale(.88) translate(-1086.25 -64.3)" fill="none" stroke="#f2f2f2" stroke-width="1.75" stroke-linejoin="round" stroke-linecap="round"><path d="M1086.25 57.9C1083.2 57.9 1081.700 60 1081.700 62.700L1081.600 66.200C1081.600 67.200 1081.100 68 1080.500 68.600C1080.200 69 1080.400 69.300 1080.900 69.300L1091.600 69.300C1092.100 69.300 1092.300 69 1092 68.600C1091.400 68 1090.900 67.200 1090.900 66.200L1090.800 62.700C1090.800 60 1089.300 57.900 1086.250 57.900Z"/><path d="M1084.800 69.900C1084.900 71.300 1087.600 71.300 1087.700 69.900M1086.250 56.900v.8"/></g></svg>
<div class="abs" style="left:108.3px;top:94.3px;width:36px;height:35.6px;border-radius:5.5px;background:#474747"></div><div class="t " style="left:123.8px;top:745.75px;font-size:11.4px;color:#f4f4f4;font-weight:bold">?</div><svg class="ico" style="left:0;top:0" width="1216" height="912" viewBox="0 0 1216 912"><g fill="none" stroke="#f4f4f4" stroke-width="1.45"><circle cx="126.2" cy="112.6" r="10.6"/><ellipse cx="126.2" cy="112.6" rx="4.5" ry="10.6"/><path d="M115.60000000000001 112.6h21.2M117.60000000000001 106.19999999999999Q126.2 110.19999999999999 134.8 106.19999999999999M117.60000000000001 119.0Q126.2 115.0 134.8 119.0"/></g><circle cx="132.9" cy="105.8" r="6" fill="#474747"/><circle cx="132.9" cy="105.8" r="4.3" fill="#3fcf72"/><path d="M126.4 146.0C129.9 148.0 133.4 148.79999999999998 136.6 149.0L136.6 155.7C136.6 161.7 131.9 166.0 126.4 168.5C120.9 166.0 116.2 161.7 116.2 155.7L116.2 149.0C119.4 148.79999999999998 122.9 148.0 126.4 146.0Z" fill="none" stroke="#f4f4f4" stroke-width="1.45" stroke-linejoin="round"/><path d="M128.0 151.6l-5.4 6.2h3.4l-1.200 4.800 5.400-6.200h-3.400z" fill="#f4f4f4"/><g fill="none" stroke="#f4f4f4" stroke-width="1.35"><circle cx="126.4" cy="193.20000000000002" r="2.15"/><circle cx="126.4" cy="210.4" r="2.15"/><circle cx="117.60000000000001" cy="201.8" r="2.15"/><circle cx="135.20000000000002" cy="201.8" r="2.15"/><path d="M124.80000000000001 194.8l-5.4 5.4M128.0 194.8l5.4 5.4M124.80000000000001 208.8l-5.4-5.4M128.0 208.8l5.4-5.4"/></g><g fill="none" stroke="#f4f4f4" stroke-width="1.45" stroke-linecap="round"><path d="M132.8 238.1A11 11 0 1 0 136.6 243.5"/><path d="M129.4 241.3A6.5 6.5 0 1 0 132.2 244.5"/><path d="M126.2 246.9L135.4 237.9"/></g><circle cx="126.2" cy="246.9" r="2.4" fill="#f4f4f4"/><path d="M126.2 279.1L138.5 288.2L126.2 297.1L113.9 288.2ZM114.30000000000001 293.1L126.2 300.40000000000003L138.1 293.1M114.30000000000001 297.40000000000003L126.2 304.7L138.1 297.40000000000003" fill="none" stroke="#f4f4f4" stroke-width="1.45" stroke-linejoin="round" stroke-linecap="round"/><path d="M118.1 347.3v-5.800M123.600 347.300v-17.800M129.400 347.300v-12.400M135.200 347.300v-21.400" fill="none" stroke="#e6e6e6" stroke-width="1.9" stroke-linecap="round"/><path d="M117.9 760.3000000000001A10.1 10.1 0 1 1 122.5 764.8000000000001C120.30000000000001 765.3000000000001 117.7 765.1 115.30000000000001 764.3000000000001C116.7 763.3000000000001 117.5 761.9000000000001 117.9 760.3000000000001Z" fill="none" stroke="#f4f4f4" stroke-width="1.35" stroke-linejoin="round"/><path d="M123.87 792.87L124.27 789.65L128.93 789.65L129.33 792.87A8.2 8.2 0 0 1 131.93 794.37L131.93 794.37L134.92 793.10L137.25 797.14L134.66 799.10A8.2 8.2 0 0 1 134.66 802.10L134.66 802.10L137.25 804.06L134.92 808.10L131.93 806.83A8.2 8.2 0 0 1 129.33 808.33L129.33 808.33L128.93 811.55L124.27 811.55L123.87 808.33A8.2 8.2 0 0 1 121.27 806.83L121.27 806.83L118.28 808.10L115.95 804.06L118.54 802.10A8.2 8.2 0 0 1 118.54 799.10L118.54 799.10L115.95 797.14L118.28 793.10L121.27 794.37A8.2 8.2 0 0 1 123.87 792.87Z" fill="none" stroke="#f4f4f4" stroke-width="1.4" stroke-linejoin="round"/><circle cx="126.6" cy="800.6" r="3.9" fill="none" stroke="#f4f4f4" stroke-width="1.4"/></svg>
<div class="abs" style="left:157.2px;top:89.8px;width:234.2px;height:38px;box-sizing:border-box;border:3.6px solid #4a5db2;border-radius:9.5px;background:#3a3a3b"></div><svg class="ico" style="left:166px;top:101px" width="17" height="17" viewBox="0 0 17 17"><g fill="none" stroke="#f0f0f0" stroke-width="1.500" stroke-linecap="round"><circle cx="7.200" cy="7.200" r="5"/><path d="M11 11l4.200 4.200"/></g></svg><div class="abs" style="left:189.400px;top:100px;width:2.200px;height:18px;background:#4d6cf0"></div><div class="t " style="left:191.4px;top:99.27px;font-size:14.8px;color:#7c7c7c">Search</div><div class="abs" style="left:378.300px;top:133.700px;width:8.400px;height:82.300px;border-radius:4.200px;background:#7b7b7b"></div><div class="t hd" style="left:164.3px;top:142.53px;font-size:12.6px;">Recents</div><div class="t hd" style="left:164.3px;top:264.03px;font-size:12.6px;">Presets</div><div class="t hd" style="left:164.3px;top:428.13px;font-size:12.6px;">Countries</div><div class="flag" style="left:175.700px;top:173.8px"><svg viewBox="0 0 28 28"><rect width="28" height="28" fill="#1b4db3"/><path d="M0 0L28 28M28 0L0 28" stroke="#fff" stroke-width="4.6"/><path d="M0 0L28 28M28 0L0 28" stroke="#e4002b" stroke-width="1.5"/><path d="M14 0V28M0 14H28" stroke="#fff" stroke-width="7.8"/><path d="M14 0V28M0 14H28" stroke="#e4002b" stroke-width="4.5"/></svg></div><div class="t nm" style="left:208.2px;top:170.23px;font-size:15.2px;">United Kingdom</div><div class="t sb" style="left:208.4px;top:186.90px;font-size:13px;">London</div><div class="flag" style="left:175.700px;top:216.4px"><svg viewBox="0 0 28 28"><rect width="28" height="28" fill="#1b4db3"/><path d="M0 0L28 28M28 0L0 28" stroke="#fff" stroke-width="4.6"/><path d="M0 0L28 28M28 0L0 28" stroke="#e4002b" stroke-width="1.5"/><path d="M14 0V28M0 14H28" stroke="#fff" stroke-width="7.8"/><path d="M14 0V28M0 14H28" stroke="#e4002b" stroke-width="4.5"/></svg></div><div class="t nm" style="left:208.2px;top:212.83px;font-size:15.2px;">United Kingdom</div><div class="t sb" style="left:208.4px;top:229.50px;font-size:13px;">Manchester</div><div class="t nm" style="left:209.2px;top:298.03px;font-size:15.2px;">Downloads</div><div class="t nm" style="left:209.2px;top:340.68px;font-size:15.2px;">Speed</div><div class="t nm" style="left:209.2px;top:383.33px;font-size:15.2px;">Browsing</div><svg class="ico" style="left:0;top:0" width="1216" height="912" viewBox="0 0 1216 912"><path d="M189.2 296.20000000000005L201.5 305.3L189.2 314.20000000000005L176.89999999999998 305.3ZM177.29999999999998 310.20000000000005L189.2 317.50000000000006L201.1 310.20000000000005M177.29999999999998 314.50000000000006L189.2 321.8L201.1 314.50000000000006" fill="none" stroke="#f4f4f4" stroke-width="1.35" stroke-linejoin="round" stroke-linecap="round"/><path d="M189.2 338.85L201.5 347.95L189.2 356.85L176.89999999999998 347.95ZM177.29999999999998 352.85L189.2 360.15000000000003L201.1 352.85M177.29999999999998 357.15000000000003L189.2 364.45L201.1 357.15000000000003" fill="none" stroke="#f4f4f4" stroke-width="1.35" stroke-linejoin="round" stroke-linecap="round"/><path d="M189.2 381.50000000000006L201.5 390.6L189.2 399.50000000000006L176.89999999999998 390.6ZM177.29999999999998 395.50000000000006L189.2 402.80000000000007L201.1 395.50000000000006M177.29999999999998 399.80000000000007L189.2 407.1L201.1 399.80000000000007" fill="none" stroke="#f4f4f4" stroke-width="1.35" stroke-linejoin="round" stroke-linecap="round"/></svg><div class="abs" style="left:0;top:0;width:396px;height:821.400px;overflow:hidden"><div class="flag" style="left:175.700px;top:459.3px"><svg viewBox="0 0 28 28"><rect width="28" height="28" fill="#e00025"/><g transform="translate(14 14.6) scale(1.22) translate(-14 -14)"><path d="M14 7.5l1.200-1.500 1.500.800-.800 1.700 3.500-.600-1.500 1.800 2.600.200-2.300 1.400 2.200 1-2.800.2 1.400 1.800-2.500-.5.6 2.200-1.800-1.300-.5 2.800-.800 1.500-.800-1.500-.500-2.800-1.800 1.300.6-2.200-2.500.5 1.400-1.800-2.800-.2 2.200-1-2.300-1.400 2.600-.2-1.500-1.800 3.500.6-.8-1.700 1.500-.8z" fill="#111"/></g></svg></div><div class="t nm" style="left:208.2px;top:455.73px;font-size:15.2px;">Albania</div><div class="t sb" style="left:208.4px;top:472.40px;font-size:13px;">Tirana</div><div class="flag" style="left:175.700px;top:502.0px"><svg viewBox="0 0 28 28"><rect width="14" height="28" fill="#4b7a3c"/><rect x="14" width="14" height="28" fill="#f4f4f4"/><path d="M16.27 10.28A4.7 4.7 0 1 0 16.27 17.72A3.9 3.9 0 1 1 16.27 10.28Z" fill="#d8142f"/><path d="M16.95 12.00L17.01 13.48L18.40 14.00L17.01 14.52L16.95 16.00L16.03 14.84L14.60 15.23L15.42 14.00L14.60 12.77L16.03 13.16Z" fill="#d8142f"/></svg></div><div class="t nm" style="left:208.2px;top:498.40px;font-size:15.2px;">Algeria</div><div class="t sb" style="left:208.4px;top:515.07px;font-size:13px;">Algiers - Virtual</div><div class="flag" style="left:175.700px;top:544.6px"><svg viewBox="0 0 28 28"><rect width="9" height="28" fill="#1b3fa8"/><rect x="9" width="10" height="28" fill="#ffd41d"/><rect x="19" width="9" height="28" fill="#d80f34"/><path d="M9.800 9.600h8.400v5.400c0 2.400-1.900 3.900-4.200 4.800-2.300-.9-4.200-2.400-4.200-4.800z" fill="#e0602f"/><path d="M11.400 11h2.600v3.400h-2.600zM14 14.400h2.600v2.600h-2.600z" fill="#ffd41d"/><path d="M14 11h2.600v3.400h-2.600zM11.400 14.400h2.600v2.600h-2.600z" fill="#d8242f"/></svg></div><div class="t nm" style="left:208.2px;top:541.07px;font-size:15.2px;">Andorra</div><div class="t sb" style="left:208.4px;top:557.74px;font-size:13px;">Andorra la Vella - V...</div><div class="flag" style="left:175.700px;top:587.3px"><svg viewBox="0 0 28 28"><rect width="28" height="14" fill="#d80f27"/><rect y="14" width="28" height="14" fill="#0b0b0b"/><path d="M17.800 9.200a5.400 5.400 0 1 1-7.600 7" fill="none" stroke="#ffd21d" stroke-width="1.7"/><path d="M10 11.500l8.500 6.800" stroke="#ffd21d" stroke-width="1.5"/><circle cx="13.600" cy="11.600" r="1.300" fill="#ffd21d"/></svg></div><div class="t nm" style="left:208.2px;top:583.74px;font-size:15.2px;">Angola</div><div class="t sb" style="left:208.4px;top:600.41px;font-size:13px;">Luanda - Virtual</div><div class="flag" style="left:175.700px;top:630.0px"><svg viewBox="0 0 28 28"><rect width="28" height="28" fill="#f4f4f4"/><rect width="28" height="9.300" fill="#4aa3f5"/><rect y="18.700" width="28" height="9.300" fill="#4aa3f5"/><circle cx="14" cy="14" r="3.100" fill="#f4b83c"/></svg></div><div class="t nm" style="left:208.2px;top:626.41px;font-size:15.2px;">Argentina</div><div class="t sb" style="left:208.4px;top:643.08px;font-size:13px;">Buenos Aires</div><div class="flag" style="left:175.700px;top:672.6px"><svg viewBox="0 0 28 28"><rect width="28" height="9.400" fill="#d90f2b"/><rect y="9.400" width="28" height="9.200" fill="#1a50c0"/><rect y="18.600" width="28" height="9.400" fill="#f59a1f"/></svg></div><div class="t nm" style="left:208.2px;top:669.08px;font-size:15.2px;">Armenia</div><div class="t sb" style="left:208.4px;top:685.75px;font-size:13px;">Yerevan - Virtual</div><div class="flag" style="left:175.700px;top:715.3px"><svg viewBox="0 0 28 28"><rect width="28" height="28" fill="#1b4db3"/><g><rect width="14" height="13" fill="#1b4db3"/><path d="M0 0L14 13M14 0L0 13" stroke="#fff" stroke-width="3"/><path d="M0 0L14 13" stroke="#e4002b" stroke-width="1.2"/><path d="M8.500 0V13M0 6.500H14" stroke="#fff" stroke-width="4.600"/><path d="M8.500 0V13M0 6.500H14" stroke="#e4002b" stroke-width="2.600"/></g><circle cx="8.600" cy="19.600" r="2.100" fill="#fff"/><circle cx="20.200" cy="7.800" r="1" fill="#fff"/><circle cx="23.600" cy="12.800" r="1" fill="#fff"/><circle cx="17" cy="13.400" r="1" fill="#fff"/><circle cx="20.400" cy="21.400" r="1.100" fill="#fff"/><circle cx="21.800" cy="16" r=".6" fill="#fff"/></svg></div><div class="t nm" style="left:208.2px;top:711.75px;font-size:15.2px;">Australia</div><div class="t sb" style="left:208.4px;top:728.42px;font-size:13px;">5 cities</div><div class="flag" style="left:175.700px;top:758.0px"><svg viewBox="0 0 28 28"><rect width="28" height="28" fill="#d90f2b"/><rect y="9.200" width="28" height="9.600" fill="#f4f4f4"/></svg></div><div class="t nm" style="left:208.2px;top:754.42px;font-size:15.2px;">Austria</div><div class="t sb" style="left:208.4px;top:771.09px;font-size:13px;">Vienna</div><div class="flag" style="left:175.700px;top:800.7px"><svg viewBox="0 0 28 28"><rect width="28" height="9.400" fill="#3f95f0"/><rect y="9.400" width="28" height="9.400" fill="#d90f2b"/><rect y="18.800" width="28" height="9.200" fill="#4b9a3c"/><path d="M15.52 9.87A5.3 5.3 0 1 0 15.52 18.13A4.4 4.4 0 1 1 15.52 9.87Z" fill="#fff"/><path d="M17.70 11.80L18.24 13.25L19.79 13.32L18.58 14.29L18.99 15.78L17.70 14.92L16.41 15.78L16.82 14.29L15.61 13.32L17.16 13.25Z" fill="#fff"/></svg></div><div class="t nm" style="left:208.2px;top:797.09px;font-size:15.2px;">Azerbaijan</div><div class="t sb" style="left:208.4px;top:813.76px;font-size:13px;">Baku - Virtual</div></div>
</div></div>
<div class="rim"></div>
</body></html>
